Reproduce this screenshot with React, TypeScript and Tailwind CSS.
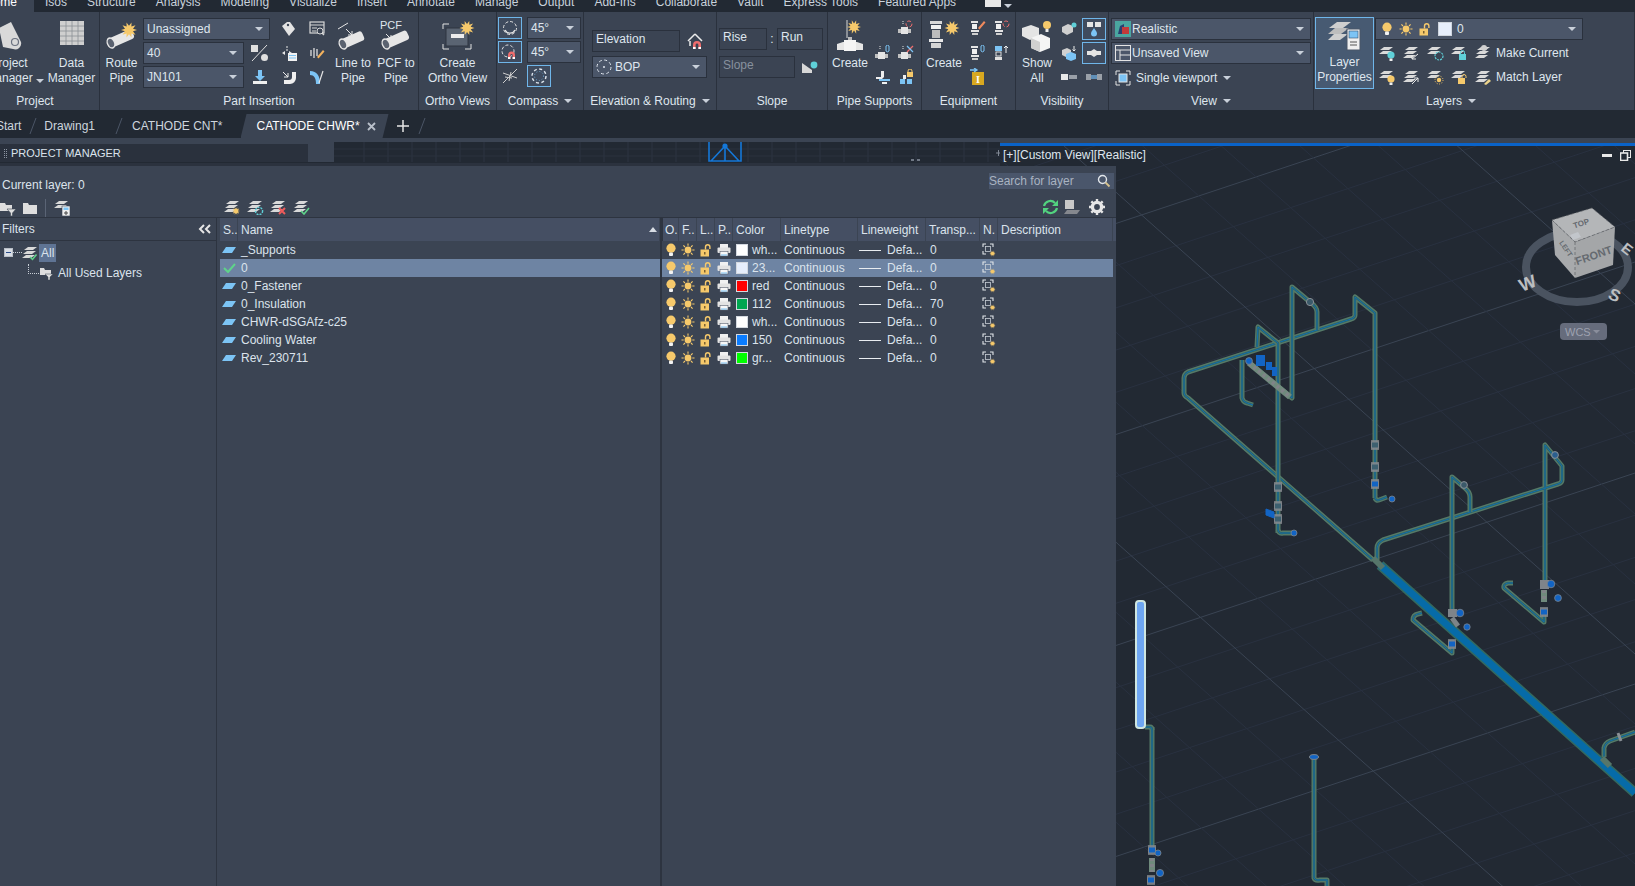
import type { ReactNode } from "react";

const GRAY = "#d9d9d9";
const AMBER = "#f6c96b";
const SKY = "#7cc4f5";
const TEAL = "#5fd0d8";

const Ic = ({ w = 16, h = 16, children }: { w?: number; h?: number; children: ReactNode }) => (
  <svg width={w} height={h} viewBox={`0 0 ${w} ${h}`} className="shrink-0">
    {children}
  </svg>
);

const Caret = () => <span className="inline-block border-x-[4px] border-t-[4px] border-x-transparent border-t-[#c9d0da]" />;

const burstPoints = (x: number, y: number, r: number) =>
  Array.from({ length: 20 }, (_, i) => {
    const a = (i * Math.PI) / 10;
    const rad = i % 2 === 0 ? r : r * 0.52;
    return `${(x + Math.cos(a) * rad).toFixed(1)},${(y + Math.sin(a) * rad).toFixed(1)}`;
  }).join(" ");

const Burst = ({ x, y, r }: { x: number; y: number; r: number }) => <polygon points={burstPoints(x, y, r)} fill={AMBER} />;

const Cyl = ({ x, y, len = 22 }: { x: number; y: number; len?: number }) => (
  <g transform={`rotate(-24 ${x} ${y})`}>
    <rect x={x} y={y - 5} width={len} height={10} rx={3} fill="#e6e6e6" />
    <ellipse cx={x} cy={y} rx={3.5} ry={5.2} fill="#5a6270" stroke="#e6e6e6" strokeWidth={1.4} />
  </g>
);

const Sheet = ({ x, y, c = GRAY, s = 1 }: { x: number; y: number; c?: string; s?: number }) => (
  <path d={`M${x + 4 * s} ${y}h${9 * s}l${-4 * s} ${3 * s}h${-9 * s}z`} fill={c} />
);

const Bulb = ({ c = AMBER }: { c?: string }) => (
  <Ic w={12} h={14}>
    <circle cx={6} cy={5.2} r={4.6} fill={c} />
    <rect x={4} y={9.5} width={4} height={3.5} rx={1} fill="#f3f3f3" />
  </Ic>
);

const Sun = () => (
  <Ic w={14} h={14}>
    <circle cx={7} cy={7} r={3.4} fill={AMBER} />
    <g stroke={AMBER} strokeWidth={1.1}>
      <path d="M7 .5v2.2M7 11.3v2.2M.5 7h2.2M11.3 7h2.2M2.4 2.4l1.6 1.6M10 10l1.6 1.6M2.4 11.6L4 10M10 4l1.6-1.6" />
    </g>
  </Ic>
);

const OpenLock = ({ c = AMBER }: { c?: string }) => (
  <Ic w={12} h={13}>
    <rect x={0.5} y={5.5} width={8.5} height={7} fill={c} />
    <path d="M5.5 5.5V3a2.2 2.2 0 0 1 4.4 0v2" fill="none" stroke={c} strokeWidth={1.4} />
    <rect x={4} y={8} width={1.5} height={2.5} fill="#7a6030" />
  </Ic>
);

const Printer = () => (
  <Ic w={14} h={14}>
    <rect x={3} y={1} width={8} height={4} fill="#f1f1f1" />
    <rect x={0.5} y={4.5} width={13} height={5.5} rx={1} fill="#e3e3e3" />
    <rect x={3} y={8.5} width={8} height={4.5} fill="#f7f7f7" stroke="#5a6270" strokeWidth={0.6} />
    <rect x={4} y={11.5} width={6} height={1} fill={SKY} />
  </Ic>
);

const NewVp = () => (
  <Ic w={14} h={14}>
    <path d="M1 4V1h3M8 1h3v3M1 8v3h3" fill="none" stroke="#e2e6ea" strokeWidth={1.1} />
    <rect x={3.5} y={3.5} width={5} height={5} fill="none" stroke="#c6ccd4" strokeWidth={0.8} />
    <Burst x={10.5} y={10.5} r={3} />
  </Ic>
);

const LayerStack = ({ badge }: { badge: ReactNode }) => (
  <Ic w={17} h={16}>
    <Sheet x={2} y={2} />
    <Sheet x={1} y={6} />
    <Sheet x={0} y={10} />
    {badge}
  </Ic>
);

const TwoSheets = ({ children, c = GRAY }: { children: ReactNode; c?: string }) => (
  <Ic w={17} h={16}>
    <Sheet x={1} y={2} c={c} />
    <Sheet x={0} y={6} c={c} />
    {children}
  </Ic>
);

const Toggle = ({ children, className = "" }: { children: ReactNode; className?: string }) => (
  <div className={`flex h-[22px] w-[24px] items-center justify-center border border-[#6fb6ea] bg-[#3f4b5e] ${className}`}>{children}</div>
);

const Combo = ({ className, children }: { className: string; children: ReactNode }) => (
  <div className={`flex h-[22px] items-center justify-between border border-[#2a313d] bg-[#4b5669] pl-[3px] pr-[6px] ${className}`}>
    <div className="flex min-w-0 items-center gap-[1px] text-[#dfe6ee]">{children}</div>
    <Caret />
  </div>
);

const Field = ({ className, children, dim }: { className: string; children: ReactNode; dim?: boolean }) => (
  <div className={`flex h-[22px] items-center border border-[#2a313d] pb-[4px] pl-[3px] ${dim ? "text-[#88919e]" : "text-[#dfe6ee]"} ${className}`}>{children}</div>
);

const Big = ({ icon, lines, className, caret }: { icon: ReactNode; lines: string[]; className: string; caret?: boolean }) => (
  <div className={`flex shrink-0 flex-col items-center pt-[8px] ${className}`}>
    <div className="flex h-[36px] items-start justify-center">{icon}</div>
    {lines.map((l, i) => (
      <div key={l} className="relative h-[15px] whitespace-nowrap text-center leading-[15px]">
        {l}
        {caret && i === 1 && (
          <span className="absolute left-[calc(100%+3px)] top-[1px]">
            <Caret />
          </span>
        )}
      </div>
    ))}
  </div>
);

const Cell = ({ children }: { children?: ReactNode }) => <div className="flex h-[24px] items-center justify-center">{children}</div>;

const Panel = ({ title, w, arrow, labelClass = "", children }: { title: string; w: string; arrow?: boolean; labelClass?: string; children: ReactNode }) => (
  <section className={`flex h-full shrink-0 flex-col border-r border-[#2a313d] ${w}`}>
    <div className="flex h-[78px] min-h-0">{children}</div>
    <div className={`flex h-[20px] items-center justify-center gap-[6px] whitespace-nowrap pt-[1px] ${labelClass}`}>
      {title}
      {arrow && <Caret />}
    </div>
  </section>
);

const Slash = ({ className }: { className: string }) => (
  <svg width={10} height={18} viewBox="0 0 10 18" className={`shrink-0 ${className}`}>
    <path d="M8 1L2 17" stroke="#4b5566" strokeWidth={1} />
  </svg>
);

const MENU = ["Isos", "Structure", "Analysis", "Modeling", "Visualize", "Insert", "Annotate", "Manage", "Output", "Add-Ins", "Collaborate", "Vault", "Express Tools", "Featured Apps"];

const MenuBar = () => (
  <div className="flex h-[12px] shrink-0 overflow-hidden bg-[#222933] text-[#c9d2dc]">
    <div className="flex w-[34px] shrink-0 justify-end overflow-hidden bg-[#3b4453] pr-[17px] text-white">
      <span className="-mt-[5px] leading-[15px]">Home</span>
    </div>
    <div className="ml-[11px] flex gap-[20px]">
      {MENU.map((m) => (
        <span key={m} className="-mt-[5px] whitespace-nowrap leading-[15px]">
          {m}
        </span>
      ))}
    </div>
    <div className="ml-[29px] flex items-center gap-[3px]">
      <div className="h-[7px] w-[16px] self-start bg-[#e8e8e8]" />
      <Caret />
    </div>
  </div>
);

const Ribbon = () => (
  <div className="flex h-[98px] shrink-0 bg-[#3b4453] text-[12px] text-[#dfe6ee]">
    <Panel title="Project" w="w-[100px]" labelClass="pr-[29px]">
      <Big
        className="-ml-[20px] w-[58px]"
        caret
        lines={["Project", "Manager"]}
        icon={
          <Ic w={30} h={32}>
            <path d="M5 8L17 2l10 20a6 6 0 0 1-8 7L9 27z" fill={GRAY} />
            <circle cx={21} cy={22} r={3.5} fill="none" stroke="#6b7280" strokeWidth={1.2} />
          </Ic>
        }
      />
      <Big
        className="ml-[7px] w-[53px]"
        lines={["Data", "Manager"]}
        icon={
          <Ic w={24} h={26}>
            <rect y={1} width={24} height={24} fill="#cfcfcf" />
            <path d="M0 6h24M0 11h24M0 16h24M0 21h24M6 1v24M12 1v24M18 1v24" stroke="#8a8f96" strokeWidth={0.8} />
          </Ic>
        }
      />
    </Panel>

    <Panel title="Part Insertion" w="w-[319px]">
      <Big
        className="w-[43px]"
        lines={["Route", "Pipe"]}
        icon={
          <Ic w={32} h={32}>
            <Cyl x={5} y={23} len={24} />
            <Burst x={23} y={10} r={8} />
          </Ic>
        }
      />
      <div className="grid grid-cols-[101px_32px_25px_32px] grid-rows-[24px_24px_24px] items-center pt-[5px]">
        <Combo className="col-span-2 w-[127px]">Unassigned</Combo>
        <Cell>
          <Ic w={15} h={16}>
            <path d="M1 5l5-4h3l5 7-6 7z" fill="#e4e4e4" />
            <circle cx={7} cy={4} r={1.2} fill="#3b4453" />
          </Ic>
        </Cell>
        <Cell>
          <Ic w={16} h={16}>
            <rect x={1} y={1} width={14} height={11} fill="none" stroke="#d8d8d8" strokeWidth={1.2} />
            <path d="M1 4h14M3 7h5M3 10h4" stroke="#d8d8d8" />
            <circle cx={11} cy={10} r={3} fill="#3b4453" stroke="#d8d8d8" />
            <path d="M13 12l2 2" stroke="#d8d8d8" strokeWidth={1.4} />
          </Ic>
        </Cell>
        <Combo className="w-[101px]">40</Combo>
        <Cell>
          <Ic w={18} h={18}>
            <rect x={0} y={1} width={7} height={7} fill="#e0e0e0" />
            <circle cx={13.5} cy={13.5} r={3.5} fill="#e0e0e0" />
            <path d="M16 1L1 17" stroke="#e0e0e0" />
          </Ic>
        </Cell>
        <Cell>
          <Ic w={18} h={17}>
            <path d="M2 8l3-2v4zM12 8l-3-2v4z" fill="#e8e8e8" />
            <rect x={8} y={8} width={9} height={8} fill="#f2f2f2" />
            <path d="M9 10.5h7M9 13h7" stroke={SKY} />
            <path d="M7 1v5" stroke="#e8e8e8" strokeDasharray="2 1" />
          </Ic>
        </Cell>
        <Cell>
          <Ic w={16} h={16}>
            <path d="M2 5v6M5 3v10M8 4v7" stroke="#dedede" strokeWidth={1.3} />
            <path d="M8 12l6-7 1.5 1.5-6 7z" fill="#f3b25e" />
          </Ic>
        </Cell>
        <Combo className="w-[101px]">JN101</Combo>
        <Cell>
          <Ic w={16} h={15}>
            <path d="M6 0h4v6h3l-5 5-5-5h3z" fill={SKY} />
            <rect x={1} y={11} width={14} height={3} fill="#efefef" />
          </Ic>
        </Cell>
        <Cell>
          <Ic w={16} h={15}>
            <path d="M11 2h4v6a6 6 0 0 1-6 6H3v-4h5a3 3 0 0 0 3-3z" fill="#efefef" />
            <path d="M2 2l5 5M7 3v4H3" stroke="#efefef" fill="none" />
          </Ic>
        </Cell>
        <Cell>
          <Ic w={16} h={16}>
            <path d="M1 2c7 0 10 5 10 13H7C7 9 5 6 1 6z" fill={SKY} />
            <path d="M10 14l4-12" stroke="#e4e4e4" strokeWidth={1.2} />
          </Ic>
        </Cell>
      </div>
      <Big
        className="w-[40px]"
        lines={["Line to", "Pipe"]}
        icon={
          <Ic w={32} h={32}>
            <path d="M1 9L11 3M9 9l6 6M15 11v4h-4" stroke="#e6e6e6" fill="none" />
            <Cyl x={6} y={24} len={22} />
          </Ic>
        }
      />
      <Big
        className="w-[46px]"
        lines={["PCF to", "Pipe"]}
        icon={
          <div className="relative">
            <Ic w={34} h={32}>
              <path d="M7 14l5 5M12 15v4H8" stroke="#e6e6e6" fill="none" />
              <Cyl x={7} y={24} len={24} />
            </Ic>
            <span className="absolute -top-[1px] left-[1px] text-[11px] leading-[12px]">PCF</span>
          </div>
        }
      />
    </Panel>

    <Panel title="Ortho Views" w="w-[78px]">
      <Big
        className="w-full"
        lines={["Create", "Ortho View"]}
        icon={
          <Ic w={34} h={32}>
            <path d="M2 9V4h6M2 24v5h6M24 29h6v-5" fill="none" stroke="#e2e2e2" />
            <rect x={5} y={8} width={22} height={18} fill="#5a6472" stroke="#2e3540" />
            <rect x={10} y={14} width={13} height={4} fill="#ececec" />
            <Burst x={26} y={8} r={7.5} />
          </Ic>
        }
      />
    </Panel>

    <Panel title="Compass" w="w-[87px]" arrow>
      <div className="grid grid-cols-[24px_54px] grid-rows-[22px_22px_22px] gap-x-[5px] gap-y-[2px] pl-[1px] pt-[5px]">
        <Toggle>
          <Ic w={16} h={16}>
            <circle cx={8} cy={8} r={6.5} fill="none" stroke="#e4e4e4" strokeDasharray="3 2" />
            <path d="M3 10a5.5 5.5 0 0 0 10 0" fill="none" stroke="#e4e4e4" strokeWidth={1.3} />
          </Ic>
        </Toggle>
        <Combo className="w-[54px]">45°</Combo>
        <Toggle>
          <Ic w={18} h={16}>
            <circle cx={7} cy={7} r={6} fill="none" stroke="#e4e4e4" strokeDasharray="3 2" />
            <path d="M7 15v-4a3.5 3.5 0 0 1 7 0v4h-2.4v-4a1.1 1.1 0 0 0-2.2 0v4z" fill="#ee6d6d" />
            <path d="M7 15v-2h2.4v2zM11.6 15v-2H14v2z" fill="#fff" />
          </Ic>
        </Toggle>
        <Combo className="w-[54px]">45°</Combo>
        <div className="flex items-center justify-center">
          <Ic w={16} h={16}>
            <path d="M1 15L15 1M1 5l14 5M3 9l7 1M9 4l-2 9" stroke="#cfcfcf" />
          </Ic>
        </div>
        <Toggle>
          <Ic w={18} h={18}>
            <circle cx={9} cy={9} r={7} fill="none" stroke="#dfe6ee" strokeWidth={1.4} strokeDasharray="3 2.5" />
            <circle cx={9} cy={9} r={4.5} fill="none" stroke={SKY} strokeWidth={0.7} strokeDasharray="1 2" />
          </Ic>
        </Toggle>
      </div>
    </Panel>

    <Panel title="Elevation & Routing" w="w-[133px]" arrow>
      <div className="pl-[8px] pt-[18px]">
        <div className="flex items-center">
          <Field className="w-[88px] bg-[#3b4453]">Elevation</Field>
          <div className="ml-[7px]">
            <Ic w={18} h={18}>
              <path d="M8 2l7 7M8 2L1 9M3 9v5" stroke="#ececec" strokeWidth={1.5} fill="none" />
              <path d="M6 17v-4a4 4 0 0 1 8 0v4h-2.6v-4a1.4 1.4 0 0 0-2.8 0v4z" fill="#ee6d6d" />
              <path d="M6 17v-2h2.6v2zM11.4 17v-2H14v2z" fill="#fff" />
            </Ic>
          </div>
        </div>
        <Combo className="mt-[4px] w-[115px]">
          <Ic w={16} h={16}>
            <circle cx={8} cy={8} r={7} fill="none" stroke="#dfe6ee" strokeDasharray="3 2.5" />
            <circle cx={8} cy={8} r={1} fill="#dfe6ee" />
          </Ic>
          <span className="ml-[2px]">BOP</span>
        </Combo>
      </div>
    </Panel>

    <Panel title="Slope" w="w-[111px]">
      <div className="pl-[2px] pt-[16px]">
        <div className="flex items-center">
          <Field className="w-[48px]">Rise</Field>
          <span className="w-[10px] text-center">:</span>
          <Field className="w-[46px]">Run</Field>
        </div>
        <div className="mt-[6px] flex items-center">
          <Field dim className="w-[76px]">
            Slope
          </Field>
          <div className="ml-[6px]">
            <Ic w={18} h={14}>
              <path d="M1 3l10 7v3H1z" fill="#d8d8d8" />
              <circle cx={13} cy={5} r={3.4} fill={TEAL} />
            </Ic>
          </div>
        </div>
      </div>
    </Panel>

    <Panel title="Pipe Supports" w="w-[94px]">
      <Big
        className="w-[44px]"
        lines={["Create"]}
        icon={
          <Ic w={32} h={34}>
            <path d="M13 0v18" stroke="#d8d8d8" />
            <Burst x={20} y={7} r={7} />
            <path d="M3 24l6-2h14l6 2v6H3z" fill="#e6e6e6" />
            <rect x={10} y={20} width={12} height={11} fill="#f5f5f5" />
            <rect x={14} y={17} width={4} height={3} fill="#bbb" />
          </Ic>
        }
      />
      <div className="grid w-[46px] grid-cols-[22px_24px] pt-[4px]">
        <Cell />
        <Cell>
          <SupportIcon>
            <circle cx={11} cy={4} r={3} fill="none" stroke="#ee6d6d" strokeWidth={1} strokeDasharray="4 2" />
          </SupportIcon>
        </Cell>
        <Cell>
          <SupportIcon>
            <path d="M11 1a2 2 0 0 1 3 0v5a2 2 0 0 1-3 0z" fill="none" stroke={SKY} />
          </SupportIcon>
        </Cell>
        <Cell>
          <SupportIcon>
            <path d="M9 7l6-6" stroke="#ee6d6d" strokeWidth={1.3} />
            <path d="M9 1l6 6" stroke={SKY} strokeWidth={1.3} />
          </SupportIcon>
        </Cell>
        <Cell>
          <Ic w={16} h={14}>
            <path d="M6 1v6H1v2h6l2-2V1z" fill="#efefef" />
            <rect x={4} y={9} width={11} height={2} fill={SKY} />
            <rect x={7} y={12} width={5} height={2} fill="#efefef" />
          </Ic>
        </Cell>
        <Cell>
          <Ic w={16} h={16}>
            <rect x={2} y={10} width={5} height={5} fill={SKY} />
            <rect x={9} y={10} width={5} height={5} fill={SKY} />
            <rect x={5} y={6} width={3} height={4} fill="#efefef" />
            <rect x={9} y={3} width={6} height={5} fill={AMBER} />
            <path d="M10 3V2a2 2 0 0 1 4 0v1" stroke={AMBER} fill="none" />
          </Ic>
        </Cell>
      </div>
    </Panel>

    <Panel title="Equipment" w="w-[94px]">
      <Big
        className="w-[44px]"
        lines={["Create"]}
        icon={
          <Ic w={32} h={34}>
            <rect x={2} y={1} width={12} height={3} fill="#d8d8d8" />
            <rect x={3} y={5} width={10} height={4} fill="#f0f0f0" />
            <rect x={4} y={10} width={8} height={8} fill="#bcbcbc" />
            <rect x={1} y={19} width={14} height={3} fill="#e8e8e8" />
            <rect x={3} y={23} width={10} height={5} fill="#d4d4d4" />
            <Burst x={24} y={8} r={7.5} />
          </Ic>
        }
      />
      <div className="grid w-[49px] grid-cols-[23px_26px] pt-[4px]">
        <Cell>
          <EquipIcon>
            <path d="M8 8l6-7 1.5 1.5-6 7z" fill="#f08a5d" />
          </EquipIcon>
        </Cell>
        <Cell>
          <EquipIcon>
            <circle cx={12} cy={4} r={3} fill="none" stroke="#ee6d6d" strokeDasharray="4 2" />
          </EquipIcon>
        </Cell>
        <Cell>
          <EquipIcon>
            <path d="M11 1a2 2 0 0 1 3 0v5a2 2 0 0 1-3 0z" fill="none" stroke={SKY} />
          </EquipIcon>
        </Cell>
        <Cell>
          <Ic w={16} h={16}>
            <rect x={1} y={1} width={7} height={5} fill={SKY} />
            <rect x={2} y={7} width={5} height={4} fill="none" stroke="#e0e0e0" />
            <rect x={1} y={12} width={7} height={3} fill="#e0e0e0" />
            <path d="M12 8V1M10 3l2-2 2 2" stroke="#efefef" fill="none" />
          </Ic>
        </Cell>
        <Cell>
          <Ic w={16} h={18}>
            <rect x={2} y={4} width={12} height={13} fill="#d8a820" />
            <text x={8} y={15} textAnchor="middle" fontSize={10} fontWeight={700} fill="#fff" fontFamily="Liberation Serif, serif">
              I
            </text>
            <path d="M0 2h6M4 0l3 2-3 2" stroke={SKY} fill="none" strokeWidth={1.3} />
          </Ic>
        </Cell>
        <Cell />
      </div>
    </Panel>

    <Panel title="Visibility" w="w-[93px]">
      <Big
        className="w-[42px]"
        lines={["Show", "All"]}
        icon={
          <Ic w={32} h={34}>
            <path d="M1 8l9-3 8 3v8l-9 4-8-4z" fill="#e4e4e4" />
            <path d="M10 18l10-4 9 4v10l-10 4-9-4z" fill="#f5f5f5" />
            <path d="M10 18l9 4v10l-9-4z" fill="#d0d0d0" />
            <circle cx={26} cy={5} r={4} fill={AMBER} />
            <rect x={24.5} y={9} width={3} height={3} fill="#eee" />
          </Ic>
        }
      />
      <div className="grid grid-cols-[22px_24px] grid-rows-[22px_22px_22px] gap-x-[2px] gap-y-[2px] pt-[6px]">
        <div className="flex items-center justify-center">
          <Ic w={16} h={16}>
            <path d="M1 6l6-3 5 2v6l-6 3-5-3z" fill="#d0d0d0" />
            <circle cx={13} cy={4} r={2.5} fill={TEAL} />
          </Ic>
        </div>
        <Toggle>
          <Ic w={16} h={16}>
            <rect x={1} y={1} width={6} height={5} fill="#e4e4e4" />
            <rect x={9} y={1} width={6} height={5} fill="#e4e4e4" />
            <path d="M8 7c2 3 3 4 3 5.5a3 3 0 0 1-6 0C5 11 6 10 8 7z" fill={SKY} />
          </Ic>
        </Toggle>
        <div className="flex items-center justify-center">
          <Ic w={16} h={16}>
            <path d="M1 5l5-2 4 2v5l-5 2-4-2z" fill="#d0d0d0" />
            <path d="M5 9l5-2 5 2v5l-5 2-5-2z" fill={SKY} />
            <path d="M13 1v5M11.5 4.5L13 6l1.5-1.5" stroke="#eee" fill="none" />
          </Ic>
        </div>
        <Toggle>
          <Ic w={16} h={10}>
            <path d="M1 3h4l3-2 3 2h4v4h-4l-3 2-3-2H1z" fill="#e4e4e4" />
          </Ic>
        </Toggle>
        <div className="flex items-center justify-center">
          <Ic w={16} h={8}>
            <rect y={1} width={7} height={6} fill="#e8e8e8" />
            <rect x={8} y={2} width={8} height={4} fill="#9aa0a8" />
          </Ic>
        </div>
        <div className="flex items-center justify-center">
          <Ic w={16} h={8}>
            <rect y={1} width={5} height={6} fill="#9aa0a8" />
            <rect x={5} y={2} width={6} height={4} fill="#5f8fb8" />
            <rect x={11} y={1} width={5} height={6} fill="#9aa0a8" />
          </Ic>
        </div>
      </div>
    </Panel>

    <Panel title="View" w="w-[205px]" arrow>
      <div className="pl-[2px] pt-[6px]">
        <Combo className="w-[200px]">
          <Ic w={16} h={16}>
            <rect width={16} height={16} fill="#4aa6a0" />
            <path d="M3 13l2-8 4-2v10z" fill="#2a3f70" />
            <rect x={7} y={6} width={7} height={7} fill="#c23a3a" />
          </Ic>
          Realistic
        </Combo>
        <Combo className="mt-[2px] w-[200px]">
          <Ic w={16} h={16}>
            <rect x={0.5} y={0.5} width={15} height={15} fill="none" stroke="#e4e4e4" />
            <path d="M0 5h16M5 5v11M5 10h11" stroke="#e4e4e4" />
          </Ic>
          Unsaved View
        </Combo>
        <div className="mt-[5px] flex items-center pl-[4px]">
          <Ic w={16} h={16}>
            <path d="M1 5V1h4M11 1h4v4M1 11v4h4M15 11v4h-4" fill="none" stroke="#e4e4e4" />
            <rect x={4} y={4} width={8} height={8} fill={SKY} stroke="#e4e4e4" />
          </Ic>
          <span className="ml-[5px] mr-[6px]">Single viewport</span>
          <Caret />
        </div>
      </div>
    </Panel>

    <Panel title="Layers" w="w-[321px]" arrow labelClass="pr-[46px]">
      <div className="ml-[1px] mt-[5px] flex h-[72px] w-[59px] shrink-0 flex-col items-center border border-[#6fb6ea] bg-[#475a72] pt-[2px]">
        <div className="h-[35px]">
          <Ic w={34} h={32}>
            <path d="M9 2h14l-8 6H1z" fill="#cfcfcf" />
            <path d="M7 8h14l-8 6H0z" fill="#bdbdbd" />
            <path d="M6 14h14l-8 6H0z" fill="#cfcfcf" />
            <rect x={19} y={9} width={13} height={21} fill="#efefef" stroke="#4b5669" />
            <rect x={21} y={11} width={9} height={7} fill={SKY} stroke="#33506e" strokeWidth={0.6} />
            <path d="M22 22h7M22 25h7" stroke="#555" />
          </Ic>
        </div>
        <div className="h-[15px] leading-[15px]">Layer</div>
        <div className="h-[15px] leading-[15px]">Properties</div>
      </div>
      <div className="ml-[1px] pt-[6px]">
        <Combo className="w-[208px] pl-[5px]">
          <div className="flex w-[50px] items-center justify-between">
            <Bulb />
            <Sun />
            <OpenLock />
          </div>
          <div className="ml-[6px] h-[14px] w-[14px] border border-[#cfd5dd] bg-[#e6eefc]" />
          <span className="ml-[4px]">0</span>
        </Combo>
        <div className="mt-[1px] flex h-[24px] items-center">
          <ActionIcons
            icons={[
              <TwoSheets key="a">
                <Bulb2 c={TEAL} />
              </TwoSheets>,
              <LayerStack key="b" badge={<path d="M9 14l6-5M9 10v4h4" stroke="#e8e8e8" fill="none" />} />,
              <TwoSheets key="c">
                <circle cx={12} cy={11} r={4} fill="none" stroke={TEAL} strokeWidth={1.2} strokeDasharray="2 1" />
              </TwoSheets>,
              <TwoSheets key="d">
                <rect x={8} y={9} width={7} height={6} fill={TEAL} />
                <path d="M9.5 9V7.5a2 2 0 0 1 4 0V9" stroke={TEAL} fill="none" />
              </TwoSheets>,
              <LayerStack key="e" badge={<circle cx={9} cy={3} r={3} fill="#d0d0d0" />} />,
            ]}
          />
          <span className="ml-[1px]">Make Current</span>
        </div>
        <div className="flex h-[24px] items-center">
          <ActionIcons
            icons={[
              <TwoSheets key="a">
                <Bulb2 c={AMBER} />
              </TwoSheets>,
              <LayerStack key="b" badge={<path d="M9 15l6-6M11 9h4v4" stroke="#e8e8e8" fill="none" />} />,
              <TwoSheets key="c">
                <circle cx={12} cy={11} r={2.2} fill={AMBER} />
                <circle cx={12} cy={11} r={4} fill="none" stroke={AMBER} strokeDasharray="1 1.5" />
              </TwoSheets>,
              <TwoSheets key="d">
                <rect x={7} y={9} width={7} height={6} fill={AMBER} />
                <path d="M11 9V7.5a2 2 0 0 1 4 0V9" stroke={AMBER} fill="none" />
              </TwoSheets>,
              <LayerStack key="e" badge={<path d="M9 15l5-5 2 2-5 4z" fill="#ecd38a" />} />,
            ]}
          />
          <span className="ml-[1px]">Match Layer</span>
        </div>
      </div>
    </Panel>
  </div>
);

const SupportIcon = ({ children }: { children: ReactNode }) => (
  <Ic w={16} h={16}>
    <path d="M5 1v4" stroke="#e4e4e4" strokeDasharray="1 1" />
    <rect x={3} y={7} width={7} height={7} fill="#e4e4e4" />
    <rect x={0} y={9} width={3} height={4} fill="#c0c0c0" />
    <rect x={10} y={9} width={3} height={4} fill="#c0c0c0" />
    {children}
  </Ic>
);

const EquipIcon = ({ children }: { children: ReactNode }) => (
  <Ic w={16} h={16}>
    <rect x={1} y={1} width={7} height={2} fill="#e4e4e4" />
    <rect x={2} y={4} width={5} height={5} fill="#f0f0f0" />
    <rect x={1} y={10} width={8} height={2} fill="#e4e4e4" />
    <rect x={2} y={13} width={6} height={2} fill="#cfcfcf" />
    {children}
  </Ic>
);

const Bulb2 = ({ c }: { c: string }) => (
  <>
    <circle cx={12} cy={10} r={3.6} fill={c} />
    <rect x={10.5} y={13.5} width={3} height={2.5} fill="#eee" />
  </>
);

const ActionIcons = ({ icons }: { icons: ReactNode[] }) => (
  <div className="grid w-[120px] grid-cols-5">
    {icons.map((ic, i) => (
      <div key={i} className="flex justify-center">
        {ic}
      </div>
    ))}
  </div>
);

const FileTabs = () => (
  <div className="flex h-[28px] shrink-0 items-end bg-[#222933] text-[12px] text-[#cdd5de]">
    <div className="flex h-[24px] items-center">
      <span className="-ml-[4px]">Start</span>
      <Slash className="ml-[7px]" />
      <span className="ml-[6px]">Drawing1</span>
      <Slash className="ml-[19px]" />
      <span className="ml-[8px]">CATHODE CNT*</span>
    </div>
    <div className="ml-[18px] flex h-[24px] w-[148px] items-center bg-[#3b4453] pl-[16px] text-white [clip-path:polygon(6px_0,100%_0,142px_100%,0_100%)]">
      CATHODE CHWR*
      <svg width={9} height={9} viewBox="0 0 9 9" className="ml-[7px]">
        <path d="M1 1l7 7M8 1L1 8" stroke="#b9c0ca" strokeWidth={1.8} />
      </svg>
    </div>
    <div className="flex h-[24px] items-center">
      <svg width={12} height={12} viewBox="0 0 12 12" className="ml-[8px]">
        <path d="M6 0v12M0 6h12" stroke="#e6e6e6" strokeWidth={1.5} />
      </svg>
      <Slash className="ml-[8px]" />
    </div>
  </div>
);

const hLines = Array.from({ length: 28 }, (_, i) => 30 + i * 24);

const DrawingStrip = () => (
  <svg width={666} height={20} viewBox="334 142 666 20" className="ml-[26px] shrink-0">
    <rect x={334} y={142} width={666} height={20} fill="#222933" />
    {hLines.map((x) => (
      <path key={x} d={`M${334 + x} 142v20`} stroke="#2d3542" />
    ))}
    <path d="M334 149H1000M334 156H1000" stroke="#2a323e" />
    <g stroke="#1477d8" strokeWidth={1.6} fill="none">
      <path d="M709 142v19h32v-19M709 161h32M725 146l-14 15M725 146l14 15M725 146v15" />
      <circle cx={725} cy={146} r={1.8} fill="#1477d8" />
    </g>
    <path d="M911 160h3M917 160h3" stroke="#707885" strokeWidth={2} />
    <path d="M996 153h5M998.5 150v6" stroke="#808894" />
  </svg>
);

type Layer = { name: string; swatch: string; color: string; tr: string; current?: boolean };

const LAYERS: Layer[] = [
  { name: "_Supports", swatch: "#ffffff", color: "wh...", tr: "0" },
  { name: "0", swatch: "#e6eefc", color: "23...", tr: "0", current: true },
  { name: "0_Fastener", swatch: "#ff0000", color: "red", tr: "0" },
  { name: "0_Insulation", swatch: "#00a651", color: "112", tr: "70" },
  { name: "CHWR-dSGAfz-c25", swatch: "#ffffff", color: "wh...", tr: "0" },
  { name: "Cooling Water", swatch: "#0a7cff", color: "150", tr: "0" },
  { name: "Rev_230711", swatch: "#00ff00", color: "gr...", tr: "0" },
];

const COLS = "grid grid-cols-[18px_422px_2px_17px_18px_18px_18px_48px_77px_68px_54px_18px_115px]";

const HEAD = ["S..", "Name", "", "O.", "F..", "L..", "P..", "Color", "Linetype", "Lineweight", "Transp...", "N.", "Description"];

const LayerRow = ({ l }: { l: Layer }) => (
  <div className={`${COLS} h-[18px] items-center`}>
    <div className={`flex h-full items-center justify-center ${l.current ? "bg-[#6e84a3]" : ""}`}>
      {l.current ? (
        <Ic w={13} h={10}>
          <path d="M1 5l4 4 7-8" fill="none" stroke="#5fd38a" strokeWidth={2} />
        </Ic>
      ) : (
        <Ic w={14} h={7}>
          <path d="M4 0h10l-4 6H0z" fill={SKY} />
        </Ic>
      )}
    </div>
    <div className={`flex h-full items-center pl-[3px] ${l.current ? "bg-[#6e84a3]" : ""}`}>{l.name}</div>
    <div className="h-full bg-[#2d3440]" />
    <div className={`col-span-10 ${l.current ? "bg-[#6e84a3]" : ""} grid h-full grid-cols-[17px_18px_18px_18px_48px_77px_68px_54px_18px_115px] items-center`}>
      <div className="flex justify-center">
        <Bulb />
      </div>
      <div className="flex justify-center">
        <Sun />
      </div>
      <div className="flex justify-center">
        <OpenLock />
      </div>
      <div className="flex justify-center">
        <Printer />
      </div>
      <div className="flex items-center">
        <div className="ml-[3px] h-[12px] w-[12px] border border-[#d4d9e0]" style={{ backgroundColor: l.swatch }} />
        <span className="ml-[4px]">{l.color}</span>
      </div>
      <div className="pl-[3px]">Continuous</div>
      <div className="flex items-center pl-[1px]">
        <div className="h-px w-[22px] bg-[#e8ecf0]" />
        <span className="ml-[6px]">Defa...</span>
      </div>
      <div className="pl-[4px]">{l.tr}</div>
      <div className="flex justify-center">
        <NewVp />
      </div>
      <div />
    </div>
  </div>
);

const Palette = () => (
  <div className="relative z-10 flex h-[720px] w-[1116px] flex-col bg-[#3b4453] text-[12px] text-[#dbe3ec]">
    <div className="flex h-[30px] shrink-0 items-start justify-between pl-[2px] pr-[2px] pt-[7px]">
      <span className="pt-[3px]">Current layer: 0</span>
      <div className="flex h-[16px] w-[125px] items-center justify-between bg-[#4a566b] pr-[3px] text-[#a9b3c1]">
        Search for layer
        <Ic w={14} h={14}>
          <circle cx={5.5} cy={5.5} r={4} fill="none" stroke="#e2e6ea" strokeWidth={1.4} />
          <path d="M8.5 8.5l4 4" stroke="#d7c28d" strokeWidth={1.8} />
        </Ic>
      </div>
    </div>

    <div className="flex h-[21px] shrink-0 items-start pt-[3px]">
      <div className="flex w-[224px] shrink-0 items-center">
        <Ic w={16} h={16}>
          <path d="M0 3h5l1 2h6v6H0z" fill="#dedede" />
          <path d="M7 9h9l-3.5 4v3h-2v-3z" fill="#dedede" stroke="#3b4453" strokeWidth={0.6} />
        </Ic>
        <div className="ml-[6px]">
          <Ic w={16} h={14}>
            <path d="M1 2h5l1 2h8v9H1z" fill="#dedede" />
          </Ic>
        </div>
        <div className="ml-[7px] h-[18px] w-px bg-[#5a6475]" />
        <div className="ml-[8px]">
          <Ic w={17} h={16}>
            <Sheet x={1} y={1} />
            <Sheet x={0} y={5} />
            <rect x={8} y={6} width={8} height={10} fill="#efefef" stroke="#3b4453" strokeWidth={0.6} />
            <rect x={9.5} y={7.5} width={5} height={2.5} fill={SKY} />
            <path d="M12 11v4M10 13h4" stroke="#444" />
          </Ic>
        </div>
      </div>
      <div className="flex gap-[6px]">
        <LayerStack badge={<Burst x={12} y={12} r={4} />} />
        <LayerStack badge={<circle cx={12} cy={12} r={3.6} fill="none" stroke={TEAL} strokeWidth={1.4} strokeDasharray="2 1" />} />
        <LayerStack badge={<path d="M9 9l6 6M15 9l-6 6" stroke="#ee5b5b" strokeWidth={2} />} />
        <LayerStack badge={<path d="M8 12l3 3 5-6" stroke="#5fd38a" strokeWidth={1.6} fill="none" />} />
      </div>
      <div className="ml-auto mr-[11px] flex items-center gap-[5px]">
        <Ic w={17} h={16}>
          <path d="M2 7a6.5 6.5 0 0 1 11-3M15 9a6.5 6.5 0 0 1-11 3" fill="none" stroke="#52d27f" strokeWidth={2.2} />
          <path d="M16 1v6h-6zM1 15V9h6z" fill="#52d27f" />
        </Ic>
        <Ic w={16} h={14}>
          <rect x={1} y={0} width={9} height={9} fill="#c8c8c8" />
          <path d="M3 10h13l-3 4H0z" fill="#85888e" />
        </Ic>
        <div className="ml-[4px]">
          <Ic w={16} h={16}>
            <circle cx={8} cy={8} r={4.6} fill="none" stroke="#e6e6e6" strokeWidth={3.4} />
            <path d="M8 0v3M8 13v3M0 8h3M13 8h3M2.3 2.3l2.2 2.2M11.5 11.5l2.2 2.2M2.3 13.7l2.2-2.2M11.5 4.5l2.2-2.2" stroke="#e6e6e6" strokeWidth={2.4} />
          </Ic>
        </div>
      </div>
    </div>

    <div className="flex min-h-0 flex-1 border-t border-[#2d3440]">
      <aside className="w-[217px] shrink-0 border-r border-[#2d3440]">
        <div className="flex h-[23px] items-center justify-between border-b border-[#2d3440] pl-[2px] pr-[5px]">
          Filters
          <Ic w={13} h={10}>
            <path d="M6 1L2 5l4 4M12 1L8 5l4 4" fill="none" stroke="#e6e6e6" strokeWidth={2} />
          </Ic>
        </div>
        <div className="flex h-[19px] items-center pt-[4px]">
          <div className="ml-[4px] flex h-[9px] w-[9px] items-center justify-center border border-[#b8bec7] bg-[#d8dde4]">
            <div className="h-[1.5px] w-[5px] bg-[#2a4c8a]" />
          </div>
          <div className="w-[9px] border-t border-dotted border-[#c8ced6]" />
          <LayerStack badge={<path d="M8 12l2.5 2.5 4-5" stroke="#5fd38a" strokeWidth={1.5} fill="none" />} />
          <span className="bg-[#5f7494] px-[2px] leading-[18px]">All</span>
        </div>
        <div className="mt-[3px] flex h-[19px] items-center">
          <div className="ml-[28px] mb-[8px] h-[10px] w-[11px] border-b border-l border-dotted border-[#c8ced6]" />
          <Ic w={14} h={14}>
            <path d="M1 2h4l1 2h6v5H1z" fill="#dedede" />
            <path d="M6 8h8l-3 3v3H9v-3z" fill="#dedede" stroke="#3b4453" strokeWidth={0.5} />
          </Ic>
          <span className="ml-[5px]">All Used Layers</span>
        </div>
      </aside>

      <div className="flex min-w-0 flex-1 flex-col pl-[3px]">
        <div className={`${COLS} h-[23px] shrink-0 bg-[#454f63]`}>
          {HEAD.map((h, i) => (
            <div key={i} className={`relative flex items-center overflow-hidden whitespace-nowrap pl-[3px] ${i === 2 ? "bg-[#2d3440]" : "border-r border-[#3b4453]"}`}>
              {h}
              {h === "Name" && <span className="absolute right-[2px] top-[9px] border-x-[4px] border-b-[5px] border-x-transparent border-b-[#d8dde4]" />}
            </div>
          ))}
        </div>
        {LAYERS.map((l) => (
          <LayerRow key={l.name} l={l} />
        ))}
        <div className={`${COLS} flex-1`}>
          <div />
          <div />
          <div className="bg-[#2d3440]" />
        </div>
      </div>
    </div>
  </div>
);

const CANVAS_B = Array.from({ length: 41 }, (_, i) => ({ c: 473 + (i - 10) * 42.2, major: (i - 10) % 5 === 0 }));
const CANVAS_A = Array.from({ length: 21 }, (_, i) => ({ c: 439 + (i - 13) * 70, major: (i - 13) % 5 === 0 }));

const Pipe = ({ d }: { d: string }) => (
  <g fill="none" strokeLinejoin="round">
    <path d={d} stroke="#557a68" strokeWidth={5} />
    <path d={d} stroke="#2f5f60" strokeWidth={2.2} />
    <path d={d} stroke="#0e74b4" strokeWidth={0.9} />
  </g>
);

const ThickPipe = ({ d }: { d: string }) => (
  <g fill="none">
    <path d={d} stroke="#34695f" strokeWidth={10} />
    <path d={d} stroke="#066ba8" strokeWidth={7} />
  </g>
);

const Valve = ({ x, y, blue }: { x: number; y: number; blue?: boolean }) => (
  <g>
    <rect x={x - 3.5} y={y - 3} width={7} height={6} fill={blue ? "#1264c4" : "#3d6070"} stroke="#7e848a" strokeWidth={1} />
    <path d={`M${x - 4} ${y - 4}h8M${x - 4} ${y + 4}h8`} stroke="#868a90" strokeWidth={1.4} />
  </g>
);

const Dot = ({ x, y, r = 3 }: { x: number; y: number; r?: number }) => <circle cx={x} cy={y} r={r} fill="#1264c4" stroke="#7e848a" strokeWidth={0.8} />;

const Viewport = () => (
  <div className="col-start-2 row-span-2 row-start-1 flex flex-col bg-[#3b4453]">
    <div className="relative mt-[5px] flex-1 overflow-hidden border-t-[3px] border-[#0a63c9] bg-[#222933]">
      <svg viewBox="1000 146 635 740" className="absolute inset-0 h-[740px] w-[635px]">
        {CANVAS_B.map((l) => (
          <line key={l.c} x1={1000} y1={l.c} x2={1635} y2={l.c - 211} stroke={l.major ? "#3a4453" : "#293140"} />
        ))}
        {CANVAS_A.map((l) => (
          <line key={l.c} x1={1000} y1={l.c} x2={1635} y2={l.c + 565} stroke={l.major ? "#3a4453" : "#293140"} />
        ))}

        <Pipe d="M1375 498V313L1355 297V315Q1355 318 1351 319L1188 372Q1184 374 1184 378V393Q1184 396 1188 398L1373 560" />
        <Pipe d="M1375 498Q1376 501 1379 500L1387 497" />
        <Pipe d="M1278 533V343L1258 327L1257 347" />
        <Pipe d="M1248 362L1292 398V287L1310 302Q1317 307 1317 312V330" />
        <Pipe d="M1242 360V398Q1243 402 1247 403L1253 405" />
        <Pipe d="M1278 530Q1279 534 1283 533L1293 533" />
        <Pipe d="M1377 560V548Q1377 543 1383 540L1558 484Q1562 483 1562 480V466L1545 445V580" />
        <Pipe d="M1452 610V477L1465 488Q1470 492 1470 497V512" />
        <Pipe d="M1544 610V622L1504 588Q1503 584 1508 583L1513 583" />
        <Pipe d="M1452 640V653L1413 620Q1413 615 1418 614L1422 613" />
        <Pipe d="M1604 757V748Q1605 743 1610 741L1635 732" />
        <Pipe d="M1152 727V850" />
        <Pipe d="M1145 727H1150Q1152 727 1152 730" />
        <Pipe d="M1314 757V878Q1315 881 1320 880L1327 880V886" />
        <ThickPipe d="M1380 565L1635 793" />
        <path d="M1373 558l10 10M1602 758l8 8" stroke="#56766a" strokeWidth={6} />

        <Valve x={1375} y={445} />
        <Valve x={1375} y={467} />
        <Valve x={1375} y={484} blue />
        <Dot x={1392} y={499} />
        <Valve x={1278} y={487} />
        <Valve x={1278} y={506} />
        <Valve x={1278} y={519} />
        <path d="M1266 509l8 3v6l-8-3z" fill="#1264c4" stroke="#1264c4" />
        <Dot x={1294} y={533} />

        {/* valve group on the first riser */}
        <g>
          <path d="M1249 363L1290 397" stroke="#6f8a7c" strokeWidth={6} />
          <path d="M1249 363L1290 397" stroke="#808488" strokeWidth={4} strokeDasharray="3 3" />
          <rect x={1256} y={355} width={9} height={11} fill="#1264c4" />
          <rect x={1266} y={362} width={6} height={8} fill="#1264c4" />
          <rect x={1272} y={367} width={5} height={9} fill="#1264c4" />
          <Dot x={1249} y={361} r={3.4} />
          <circle cx={1310} cy={302} r={3.6} fill="#3b5a6a" stroke="#8a9096" />
        </g>

        <circle cx={1555} cy={455} r={3.4} fill="#2b5f8e" stroke="#8a9096" />
        <circle cx={1464} cy={485} r={3.4} fill="#3b5a6a" stroke="#8a9096" />

        <g>
          <rect x={1540} y={580} width={9} height={9} fill="#7e848a" />
          <Dot x={1551} y={584} r={3.8} />
          <path d="M1544 590V602" stroke="#6f8a7c" strokeWidth={6} />
          <path d="M1544 590V602" stroke="#808488" strokeWidth={4} strokeDasharray="3 3" />
          <Dot x={1558} y={598} r={3.4} />
          <Valve x={1544} y={612} blue />
          <rect x={1448} y={609} width={9} height={8} fill="#7e848a" />
          <Dot x={1460} y={613} r={3.8} />
          <Dot x={1467} y={627} r={3.2} />
          <path d="M1452 618l6 8" stroke="#7d8488" strokeWidth={5} />
          <Valve x={1452} y={644} blue />
          <path d="M1618 733l3 8" stroke="#8a9096" strokeWidth={3} />
        </g>

        {/* selected riser */}
        <rect x={1136} y={601} width={9} height={127} rx={3} fill="#6ea6f2" stroke="#cfe6e0" strokeWidth={2} />

        <g>
          <Valve x={1152} y={850} blue />
          <Dot x={1158} y={853} r={3} />
          <path d="M1152 858V872" stroke="#6f8a7c" strokeWidth={6} />
          <path d="M1152 858V872" stroke="#808488" strokeWidth={4} strokeDasharray="3 3" />
          <Dot x={1160} y={873} r={3.6} />
          <Valve x={1151} y={880} blue />
          <ellipse cx={1314} cy={757} rx={4.5} ry={2.4} fill="#1264c4" stroke="#7e848a" />
        </g>

        {/* view cube */}
        <ellipse cx={1577} cy={267} rx={51} ry={35} fill="none" stroke="#4a5360" strokeWidth={8} />
        <path d="M1552 220L1592 208L1615 227L1575 242Z" fill="#b4b6b8" />
        <path d="M1552 220L1575 242L1575 278L1555 255Z" fill="#a8aaac" />
        <path d="M1575 242L1615 227L1613 265L1575 278Z" fill="#a4a6a8" />
        <path d="M1552 220L1592 208L1615 227M1552 220L1575 242L1615 227M1575 242V278" fill="none" stroke="#5e6266" strokeWidth={0.7} strokeDasharray="3 2" />
        <path d="M1570 235l8-3 3 5-8 3z" fill="#c2c6cb" />
        <g fontFamily="Liberation Sans, sans-serif" fontWeight={700} fill="#656a70">
          <text x={1582} y={226} fontSize={8} textAnchor="middle" transform="rotate(-18 1582 226)">
            TOP
          </text>
          <text x={1564} y={250} fontSize={7} textAnchor="middle" transform="rotate(56 1564 250)">
            LEFT
          </text>
          <text x={1595} y={259} fontSize={11} textAnchor="middle" transform="rotate(-19 1595 259)">
            FRONT
          </text>
        </g>
        <g fontFamily="Liberation Sans, sans-serif" fontWeight={700} fill="#bcbec1">
          <text x={1522} y={292} fontSize={18} transform="rotate(-22 1522 292)">
            W
          </text>
          <text x={1620} y={250} fontSize={15} transform="rotate(38 1620 250)">
            E
          </text>
          <text x={1607} y={298} fontSize={17} transform="rotate(25 1607 298)">
            S
          </text>
        </g>
        <rect x={1560} y={323} width={47} height={17} rx={4} fill="#666c7c" />
        <text x={1565} y={336} fontFamily="Liberation Sans, sans-serif" fontSize={11} fill="#9ea2b0">
          WCS
        </text>
        <path d="M1593 330h7l-3.5 3.5z" fill="#8a8e9c" />
      </svg>

      <span className="absolute left-[3px] top-[1px] text-[12px] leading-[17px] text-[#dfe6ee]">[+][Custom View][Realistic]</span>
      <div className="absolute right-[4px] top-[4px] flex items-center gap-[8px]">
        <div className="h-[3px] w-[10px] bg-[#e8e8e8]" />
        <Ic w={11} h={11}>
          <rect x={3.5} y={0.5} width={7} height={7} fill="none" stroke="#e8e8e8" />
          <rect x={0.5} y={3} width={7} height={7.5} fill="#222933" stroke="#e8e8e8" strokeWidth={1.6} />
        </Ic>
      </div>
    </div>
  </div>
);

export default function App() {
  return (
    <div className="flex h-[886px] w-[1635px] flex-col overflow-hidden bg-[#222933] text-[12px] [font-family:'Liberation_Sans',sans-serif]">
      <MenuBar />
      <Ribbon />
      <FileTabs />
      <main className="grid min-h-0 flex-1 grid-cols-[1000px_635px] grid-rows-[28px_720px]">
        <div className="col-start-1 row-start-1 flex h-[28px] flex-col bg-[#3b4453]">
          <div className="flex h-[24px] items-end">
            <div className="flex h-[18px] w-[308px] shrink-0 items-center bg-[#2a313d] pl-[4px] text-[11px] text-[#dbe3ec]">
              <span className="mr-[4px] h-[9px] w-[3px] border-x border-dotted border-[#8d96a3]" />
              PROJECT MANAGER
            </div>
            <DrawingStrip />
          </div>
          <div className="h-[4px] border-t border-[#222933] bg-[#2b323e]" />
        </div>
        <Viewport />
        <div className="col-start-1 row-start-2">
          <Palette />
        </div>
      </main>
    </div>
  );
}
